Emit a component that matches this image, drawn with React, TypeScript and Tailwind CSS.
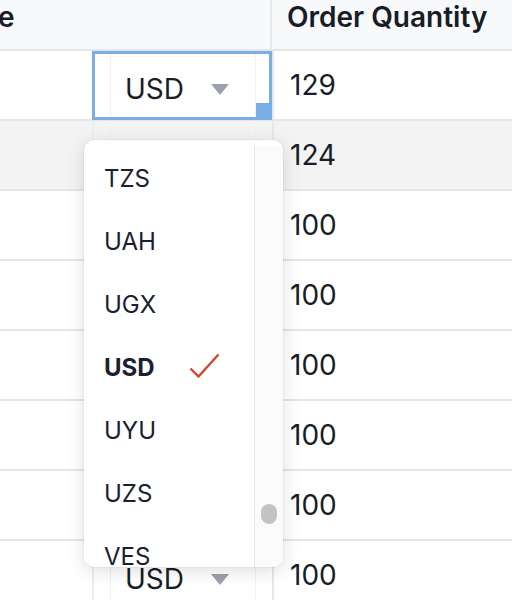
import React from 'react';

const quantities = [129, 124, 100, 100, 100, 100, 100, 100];
const currencies = ['TZS', 'UAH', 'UGX', 'USD', 'UYU', 'UZS', 'VES'];

const Caret: React.FC = () => (
  <svg width="18" height="11" viewBox="0 0 18 11" className="ml-[27px] shrink-0">
    <polygon points="0,0 18,0 9,11" fill="#9da1ab" />
  </svg>
);

const CurrencyCell: React.FC<{ editing?: boolean }> = ({ editing }) => (
  <div className="relative w-[180px] shrink-0 h-full border-l-2 border-[#ececf0] px-4">
    <div className="h-full border-x border-[#f0f0f3] flex items-center pt-[8px] pl-[14px]">
      <span>USD</span>
      <Caret />
    </div>
    {editing && (
      <div className="absolute -left-[2px] right-0 top-0 -bottom-px border-[3px] border-[#79aee6] pointer-events-none">
        <div className="absolute right-0 bottom-0 w-[13px] h-[14px] bg-[#79aee6]" />
      </div>
    )}
  </div>
);

export default function App() {
  return (
    <div className="relative w-[512px] h-[600px] overflow-hidden bg-white font-['Inter',sans-serif] text-[#181d27]">
      {/* header */}
      <div className="flex h-[51px] border-b-2 border-[#e6e6ea] bg-[#f8f9fb] text-[28px] font-semibold leading-[34px]">
        <div className="w-[272px] shrink-0 -ml-[2px]">e</div>
        <div className="flex-1 border-l-2 border-[#e6e7eb] pl-[15px]">Order Quantity</div>
      </div>

      {/* rows */}
      {quantities.map((q, i) => (
        <div
          key={i}
          className={`flex h-[70px] border-b-2 border-[#e6e6ea] text-[28px] leading-[34px] ${i === 1 ? 'bg-[#f3f3f4]' : 'bg-white'}`}
        >
          <div className="w-[92px] shrink-0" />
          <CurrencyCell editing={i === 0} />
          <div className="flex-1 border-l-2 border-[#e6e7eb] pl-4 flex items-center">{q}</div>
        </div>
      ))}

      {/* dropdown */}
      <div className="absolute left-[84px] top-[140px] w-[199px] h-[427px] rounded-[10px] bg-white overflow-hidden flex shadow-[0_4px_18px_rgba(0,0,0,0.13)] ring-1 ring-black/[0.03]">
        <div className="w-[170px] shrink-0 pt-[7px] text-[24px] leading-[29px] text-[#1b2031]">
          {currencies.map((c) => (
            <div key={c} className="h-[63px] flex items-center pl-[20px]">
              {c === 'USD' ? (
                <>
                  <span className="font-bold">{c}</span>
                  <svg width="31" height="25" viewBox="0 0 31 25" className="ml-[34px] -mt-[4px]">
                    <polyline
                      points="1.5,15.5 9.5,23.5 29.5,1.5"
                      fill="none"
                      stroke="#d4462d"
                      strokeWidth="2.4"
                    />
                  </svg>
                </>
              ) : (
                <span>{c}</span>
              )}
            </div>
          ))}
        </div>
        <div className="flex-1 mt-[6px] border-l border-[#e6e6e9] bg-[#fbfbfb] flex flex-col items-center">
          <div className="mt-[358px] w-[16px] h-[20px] rounded-full bg-[#c3c3c3]" />
        </div>
      </div>
    </div>
  );
}
